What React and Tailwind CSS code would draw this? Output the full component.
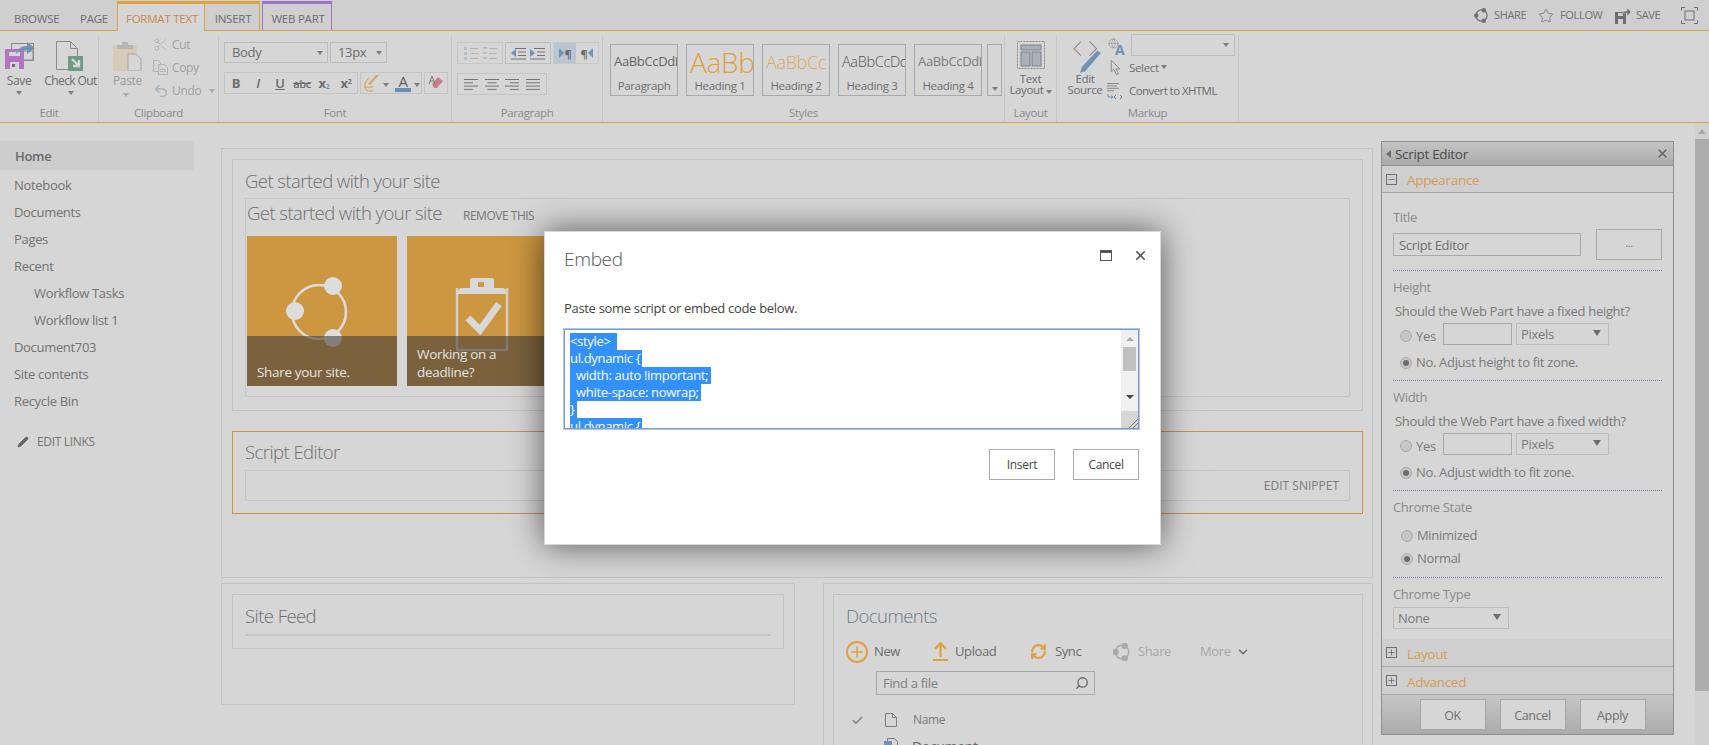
import { Scissors, Undo2, Star, Pencil, Search, Check, ChevronDown, Plus, Minus, X, RefreshCw, Globe } from "lucide-react";

const Caret = ({ className = "" }) => (
  <span className={`inline-block w-0 h-0 border-x-[3px] border-x-transparent border-t-[4px] border-t-[#7d7d7d] ${className}`}></span>
);

const GroupLabel = ({ children }) => (
  <div className="h-[20px] pt-[2px] flex items-center justify-center text-[11.500px] text-[#8a8a8a]">{children}</div>
);

const Lines = ({ widths, x = 0, y = 0, gap = 4, color = "#7d7d7d" }) => (
  <>
    {widths.map((w, i) => (
      <rect key={i} x={x + (typeof w === "number" ? 0 : w[0])} y={y + i * gap} width={typeof w === "number" ? w : w[1]} height="1" fill={color} />
    ))}
  </>
);

const SaveIcon = () => (
  <svg width="30" height="30" viewBox="0 0 30 30" className="block">
    <rect x="6.5" y="2.5" width="22" height="17" fill="none" stroke="#8a8a8a" />
    <rect x="17" y="10" width="11" height="9" fill="#d6d6d6" stroke="#8a8a8a" />
    <path d="M0 8h19v20H0z" fill="#b574c2" />
    <rect x="4" y="11" width="11" height="4" fill="#d6d6d6" />
    <rect x="5" y="21" width="9" height="7" fill="#d6d6d6" />
    <rect x="7" y="23" width="3" height="3" fill="#6d6d6d" />
    <path d="M11 13c1-5 5-8 11-8V1l8 6-8 6V9c-5 0-8 1-11 4z" fill="#6f92b5" />
  </svg>
);

const CheckOutIcon = () => (
  <svg width="28" height="30" viewBox="0 0 28 30" className="block">
    <path d="M0.5 0.5h14l7 7v21h-21z" fill="none" stroke="#8a8a8a" />
    <path d="M14.5 .5v7h7" fill="none" stroke="#8a8a8a" />
    <rect x="12" y="15" width="15" height="15" fill="#6f9b84" />
    <path d="M16 18l7 7M23 19v6h-6" stroke="#d6d6d6" strokeWidth="2.4" fill="none" />
  </svg>
);

const PasteIcon = () => (
  <svg width="29" height="30" viewBox="0 0 29 30" className="block">
    <rect x="0" y="4" width="24" height="26" fill="#d4ccb9" />
    <path d="M4 4h16v4H4zM9 1h6v4H9z" fill="#b5b5b5" />
    <path d="M15 13h8l5 5v12H15z" fill="#d6d6d6" stroke="#a8a8a8" />
  </svg>
);

const CopyIcon = () => (
  <svg width="15" height="15" viewBox="0 0 15 15" className="block">
    <path d="M.5.5h5l2 2v9h-7z" fill="none" stroke="#b2b2b2" />
    <path d="M5.5 4.5h6l3 3v7h-9z" fill="#d6d6d6" stroke="#b2b2b2" />
    <Lines widths={[6, 6]} x={7} y={9} gap={2} color="#b2b2b2" />
  </svg>
);

const ListIcon = ({ numbered }) => (
  <svg width="14" height="14" viewBox="0 0 14 14" className="block">
    {[1, 6, 11].map((y) => (
      <rect key={y} x="0" y={y} width={numbered ? 4 : 3} height={numbered ? 2 : 3} fill="#b8bfc6" />
    ))}
    <Lines widths={[8, 8, 8]} x={6} y={2} gap={5} color="#b3b3b3" />
  </svg>
);

const IndentIcon = ({ flip }) => (
  <svg width="15" height="13" viewBox="0 0 15 13" className="block">
    <Lines widths={[[4, 11], [7, 8], [7, 8], [0, 15]]} y={1} gap={3.5} color="#737373" />
    <path d={flip ? "M5 2v8l-5-4z" : "M0 2v8l5-4z"} fill="#6f92b5" />
  </svg>
);

const DirIcon = ({ flip }) => (
  <div className={`flex items-center gap-[1px] ${flip ? "flex-row-reverse" : ""}`}>
    <span className={`w-0 h-0 border-y-[5px] border-y-transparent ${flip ? "border-r-[5px] border-r-[#6f92b5]" : "border-l-[5px] border-l-[#6f92b5]"}`}></span>
    <span className="text-[11px] font-bold leading-none text-[#6c6c6c]">¶</span>
  </div>
);

const AlignIcon = ({ kind }) => {
  const table = {
    left: [[0, 14], [0, 9], [0, 14], [0, 9]],
    center: [[0, 14], [2.5, 9], [0, 14], [2.5, 9]],
    right: [[0, 14], [5, 9], [0, 14], [5, 9]],
    justify: [[0, 14], [0, 14], [0, 14], [0, 14]],
  };
  return (
    <svg width="14" height="13" viewBox="0 0 14 13" className="block">
      <Lines widths={table[kind]} y={1} gap={3.3} color="#757575" />
    </svg>
  );
};

const TextLayoutIcon = () => (
  <svg width="28" height="28" viewBox="0 0 28 28" className="block">
    <rect x=".5" y=".5" width="27" height="27" fill="none" stroke="#8a8a8a" strokeDasharray="2 1" />
    <rect x="4" y="4" width="20" height="5" fill="#a9b2bb" stroke="#7b8086" />
    <rect x="4" y="11" width="9" height="14" fill="#a9b2bb" stroke="#7b8086" />
    <rect x="15" y="11" width="9" height="14" fill="#a9b2bb" stroke="#7b8086" />
  </svg>
);

const EditSourceIcon = () => (
  <svg width="32" height="33" viewBox="0 0 32 38" className="block">
    <path d="M9 2L1 10l8 8M19 2l8 8-8 8" fill="none" stroke="#8a8a8a" strokeWidth="1.2" />
    <path d="M28 12l4 3-18 21-6 2 2-7z" fill="#6f92b5" />
  </svg>
);

const ConvertIcon = () => (
  <svg width="16" height="16" viewBox="0 0 16 16" className="block">
    <Lines widths={[12, 10, 12, 7]} y={0} gap={2.4} color="#8a8a8a" />
    <path d="M1 11v3h5M4 12.5l2 1.5-2 1.5" stroke="#6f92b5" fill="none" />
    <path d="M9 12l-2 2 2 2M13 12l2 2-2 2" stroke="#7a7a7a" fill="none" />
  </svg>
);

const ShareGlyph = ({ size = 16, color = "#6f6f6f", dot = 3 }) => (
  <svg width={size} height={size} viewBox="0 0 20 20" className="block">
    <circle cx="10" cy="10" r="7.5" fill="none" stroke={color} strokeWidth="1.6" />
    <circle cx="13" cy="3" r={dot} fill={color} />
    <circle cx="3" cy="10" r={dot} fill={color} />
    <circle cx="13" cy="17" r={dot} fill={color} />
  </svg>
);

const SaveGlyph = () => (
  <svg width="16" height="16" viewBox="0 0 16 16" className="block">
    <path d="M0 4h11v12H0z" fill="#6d6d6d" />
    <rect x="3" y="5" width="5" height="3" fill="#d0d0d0" />
    <rect x="3" y="11" width="5" height="5" fill="#d0d0d0" />
    <path d="M6 6c1-2 3-3 6-3V0l4 4-4 4V5C9 5 7 6 6 6z" fill="#6d6d6d" stroke="#d0d0d0" strokeWidth=".5" />
  </svg>
);

const FocusGlyph = () => (
  <svg width="17" height="17" viewBox="0 0 17 17" className="block">
    <rect x="4" y="4" width="9" height="9" fill="none" stroke="#6d6d6d" />
    <path d="M4 .5H.5v3M13 .5h3.500v3M4 16.500H.5v-3M13 16.500h3.500v-3" fill="none" stroke="#6d6d6d" />
  </svg>
);

const UploadGlyph = () => (
  <svg width="15" height="20" viewBox="0 0 15 20" className="block">
    <path d="M7.500 1v14M2 7l5.500-6L13 7" fill="none" stroke="#dfa040" strokeWidth="2.200" />
    <rect x="0" y="17" width="15" height="2" fill="#dfa040" />
  </svg>
);

const ClipboardGlyph = () => (
  <svg width="56" height="76" viewBox="0 0 56 76" className="block">
    <path d="M3 12v60q0 2 2 2h46q2 0 2-2V12" fill="none" stroke="#d8d8d8" strokeWidth="2.500" opacity=".85" />
    <path d="M8 12h8V4q0-2 2-2h20q2 0 2 2v8h8q4 0 4 4v2H4v-2q0-4 4-4z" fill="#d8d8d8" />
    <rect x="24" y="6" width="6" height="5" fill="#cc9740" />
    <path d="M14 42l12 12 19-26" fill="none" stroke="#d8d8d8" strokeWidth="7" />
  </svg>
);

const FontBtn = ({ children, className = "" }) => (
  <span className={`w-[22px] text-center leading-none ${className}`}>{children}</span>
);

const StyleBox = ({ preview, name, previewClass }) => (
  <div className="w-[68px] h-[52px] border border-[#a9a9a9] overflow-hidden flex flex-col items-center">
    <div className={`h-[31px] w-full pl-[3px] pt-[3px] flex items-center justify-start whitespace-nowrap overflow-hidden ${previewClass}`}>{preview}</div>
    <div className="text-[11.500px] leading-[17px] mt-[1px] text-[#6e6e6e] whitespace-nowrap">{name}</div>
  </div>
);

const Ribbon = () => (
  <div className="h-[92px] flex border-b border-[#dfa23e] bg-[#d6d6d6] text-[#6c6c6c] text-[11.500px] tracking-[-0.03em]">
    <div className="w-[99px] mt-[4px] border-r border-[#c6c6c6] flex flex-col">
      <div className="h-[67px] flex text-[12px] leading-[15px]">
        <div className="w-[38px] pt-[6px] flex flex-col items-start">
          <div className="ml-[5px]"><SaveIcon /></div>
          <div className="w-[38px] text-center mt-[2px]">Save</div>
          <div className="w-[38px] text-center leading-[8px] -mt-[1px]"><Caret /></div>
        </div>
        <div className="w-[55px] ml-[5px] pt-[6px] flex flex-col items-center">
          <div className="pr-[2px]"><CheckOutIcon /></div>
          <div className="mt-[2px] whitespace-nowrap tracking-[-0.05em]">Check Out</div>
          <div className="leading-[8px] -mt-[1px]"><Caret /></div>
        </div>
      </div>
      <GroupLabel>Edit</GroupLabel>
    </div>

    <div className="w-[120px] mt-[4px] border-r border-[#c6c6c6] flex flex-col text-[#a1a1a1]">
      <div className="h-[67px] flex text-[12px]">
        <div className="w-[54px] pl-[14px] pt-[6px] flex flex-col items-start">
          <PasteIcon />
          <div className="w-[26px] text-center mt-[2px] leading-[16px] text-[#9a9a9a]">Paste</div>
          <div className="w-[26px] text-center leading-[8px]"><Caret className="opacity-50" /></div>
        </div>
        <div className="flex flex-col -mt-[2px]">
          <div className="h-[24px] flex items-center gap-[4px]"><Scissors size={15} strokeWidth={1.3} color="#a8b3bd" /><span>Cut</span></div>
          <div className="h-[24px] flex items-center gap-[4px]"><CopyIcon /><span>Copy</span></div>
          <div className="h-[24px] flex items-center gap-[3px]"><Undo2 size={16} strokeWidth={2} color="#a8b3bd" /><span>Undo</span><Caret className="ml-[5px] opacity-50" /></div>
        </div>
      </div>
      <GroupLabel>Clipboard</GroupLabel>
    </div>

    <div className="w-[233px] mt-[4px] border-r border-[#c6c6c6] flex flex-col">
      <div className="h-[67px] pt-[7px] pl-[5px]">
        <div className="flex gap-[2px] text-[13px]">
          <div className="w-[104px] h-[21px] border border-[#bdbdbd] pl-[7px] pr-[4px] flex items-center justify-between">Body<Caret /></div>
          <div className="w-[57px] h-[21px] border border-[#bdbdbd] pl-[7px] pr-[4px] flex items-center justify-between">13px<Caret /></div>
        </div>
        <div className="flex gap-[2px] mt-[9px]">
          <div className="w-[134px] h-[22px] border border-[#c4c4c4] flex items-center text-[13px]">
            <FontBtn className="font-bold">B</FontBtn>
            <FontBtn className="italic font-semibold">I</FontBtn>
            <FontBtn className="underline font-semibold">U</FontBtn>
            <FontBtn className="line-through text-[11px] font-semibold">abc</FontBtn>
            <FontBtn className="font-bold">x<sub className="text-[7px] text-[#6f92b5]">2</sub></FontBtn>
            <FontBtn className="font-bold">x<sup className="text-[7px]">2</sup></FontBtn>
          </div>
          <div className="w-[62px] h-[22px] border border-[#c4c4c4] flex items-center pl-[3px]">
            <svg width="16" height="18" viewBox="0 0 16 18" className="block">
              <path d="M15 1L6 11l-2-1 8-9z" fill="#cfa869" />
              <path d="M5 4Q0 8 1 13t8 4" fill="none" stroke="#d9a855" strokeWidth="1.200" />
              <path d="M0 13h9" stroke="#d9a855" strokeWidth="1.200" />
            </svg>
            <Caret className="ml-[3px] mt-[3px]" />
            <div className="ml-[6px] flex flex-col items-center w-[16px]">
              <span className="text-[15px] leading-[13px] text-[#5f5f5f]">A</span>
              <span className="w-[16px] h-[4px] bg-[#6d8db0]"></span>
            </div>
            <Caret className="ml-[3px] mt-[3px]" />
          </div>
          <div className="w-[24px] h-[22px] border border-[#c4c4c4] flex items-center justify-center">
            <svg width="16" height="16" viewBox="0 0 16 16" className="block">
              <path d="M4 9l6-7 5 4-6 7H6z" fill="#c97f89" />
              <path d="M1 9l3-8 3 8M2 6h4" stroke="#7d7d7d" fill="none" />
            </svg>
          </div>
        </div>
      </div>
      <GroupLabel>Font</GroupLabel>
    </div>

    <div className="w-[151px] mt-[4px] border-r border-[#c6c6c6] flex flex-col">
      <div className="h-[67px] pt-[7px] pl-[5px]">
        <div className="flex gap-[2px]">
          <div className="w-[46px] h-[22px] border border-[#c8c8c8] flex items-center justify-around px-[3px]"><ListIcon /><ListIcon numbered /></div>
          <div className="w-[46px] h-[22px] border border-[#bdbdbd] flex items-center justify-around px-[3px]"><IndentIcon flip /><IndentIcon /></div>
          <div className="w-[46px] h-[22px] border border-[#c8c8c8] flex items-center">
            <div className="w-[23px] h-full bg-[#b9c6d2] flex items-center justify-center"><DirIcon /></div>
            <div className="w-[23px] h-full flex items-center justify-center"><DirIcon flip /></div>
          </div>
        </div>
        <div className="w-[90px] h-[22px] mt-[9px] border border-[#c4c4c4] flex items-center justify-around px-[3px]">
          <AlignIcon kind="left" /><AlignIcon kind="center" /><AlignIcon kind="right" /><AlignIcon kind="justify" />
        </div>
      </div>
      <GroupLabel>Paragraph</GroupLabel>
    </div>

    <div className="w-[402px] mt-[4px] border-r border-[#c6c6c6] flex flex-col">
      <div className="h-[67px] flex gap-[8px] pl-[7px] pt-[9px]">
        <StyleBox preview="AaBbCcDdE" name="Paragraph" previewClass="text-[13px] text-[#666]" />
        <StyleBox preview="AaBb" name="Heading 1" previewClass="text-[28px] font-light text-[#dfa040]" />
        <StyleBox preview="AaBbCc" name="Heading 2" previewClass="text-[18px] font-light text-[#dba65c]" />
        <StyleBox preview="AaBbCcDd" name="Heading 3" previewClass="text-[14.500px] font-light text-[#555]" />
        <StyleBox preview="AaBbCcDdE" name="Heading 4" previewClass="text-[13px] text-[#7c7c7c]" />
        <div className="w-[15px] h-[52px] -ml-[3px] border border-[#a9a9a9] flex items-end justify-center pb-[4px]"><Caret /></div>
      </div>
      <GroupLabel>Styles</GroupLabel>
    </div>

    <div className="w-[52px] mt-[4px] border-r border-[#c6c6c6] flex flex-col items-center">
      <div className="h-[67px] flex flex-col items-center">
        <div className="pt-[6px]"><TextLayoutIcon /></div>
        <div className="leading-[11px] text-center mt-[4px] whitespace-nowrap">Text<br />Layout<Caret className="ml-[2px]" /></div>
      </div>
      <GroupLabel>Layout</GroupLabel>
    </div>

    <div className="w-[182px] mt-[4px] border-r border-[#c6c6c6] flex flex-col">
      <div className="h-[67px] flex">
        <div className="w-[48px] pl-[8px] flex flex-col items-center leading-[11px]">
          <div className="pt-[5px] pl-[4px]"><EditSourceIcon /></div>
          <div className="text-center">Edit<br />Source</div>
        </div>
        <div className="flex flex-col -mt-[1px]">
          <div className="flex items-start">
            <div className="relative w-[26px] h-[24px] pt-[4px] pl-[3px]">
              <Globe size={11} strokeWidth={1} color="#7d7d7d" />
              <span className="absolute left-[10px] top-[9px] text-[14px] leading-none font-bold text-[#6f92b5]">A</span>
            </div>
            <div className="w-[104px] h-[22px] border border-[#bdbdbd] flex items-center justify-end pr-[5px]"><Caret /></div>
          </div>
          <div className="h-[24px] flex items-center -mt-[3px] pt-[1px]">
            <svg width="24" height="17" viewBox="0 0 25 17" className="block">
              <path d="M6.500 1v12l3-2.500 2.500 5.500 2-1-2.500-5h4z" fill="none" stroke="#8a8a8a" />
            </svg>
            <span>Select</span><Caret className="ml-[2px]" />
          </div>
          <div className="h-[24px] flex items-center pt-[1px]">
            <div className="w-[24px] pl-[2px]"><ConvertIcon /></div>
            <span className="whitespace-nowrap tracking-[-0.05em]">Convert to XHTML</span>
          </div>
        </div>
      </div>
      <GroupLabel>Markup</GroupLabel>
    </div>
  </div>
);

const TabBar = () => (
  <div className="h-[31px] bg-[#cfcfcf] border-b border-[#dfa23e] flex text-[11.500px] text-[#6c6c6c] pt-[1px] tracking-[-0.02em]">
    <div className="w-[67px] pl-[14px] pt-[9px]">BROWSE</div>
    <div className="w-[50px] pl-[13px] pt-[9px]">PAGE</div>
    <div className="w-[88px] h-[30px] bg-[#d6d6d6] border-t-[3px] border-x border-[#dfa23e] text-[#c98a47] text-center pt-[6px] pl-[2px] whitespace-nowrap">FORMAT TEXT</div>
    <div className="w-[55px] h-[29px] border-t-[3px] border-r border-[#dfa23e] text-center pt-[6px] pl-[2px]">INSERT</div>
    <div className="w-[70px] h-[29px] ml-[2px] border-t-[3px] border-x border-[#9d75c6] text-center pt-[6px] pl-[2px] whitespace-nowrap">WEB PART</div>
    <div className="ml-auto flex items-center h-[29px] text-[11px] tracking-[-0.03em] text-[#707070]">
      <ShareGlyph size={15} />
      <span className="ml-[5px] w-[32px] whitespace-nowrap">SHARE</span>
      <Star size={16} strokeWidth={1.200} className="ml-[12px]" />
      <span className="ml-[6px] w-[41px] whitespace-nowrap">FOLLOW</span>
      <div className="ml-[14px]"><SaveGlyph /></div>
      <span className="ml-[5px] w-[24px] whitespace-nowrap">SAVE</span>
      <div className="ml-[21px] mr-[11px]"><FocusGlyph /></div>
    </div>
  </div>
);

const navItems = [
  { label: "Notebook" },
  { label: "Documents" },
  { label: "Pages" },
  { label: "Recent" },
  { label: "Workflow Tasks", sub: true },
  { label: "Workflow list 1", sub: true },
  { label: "Document703" },
  { label: "Site contents" },
  { label: "Recycle Bin" },
];

const LeftNav = () => (
  <div className="w-[221px] shrink-0 pt-[18px] text-[13px] text-[#727272]">
    <div className="w-[194px] h-[29px] bg-[#cdcdcd] pl-[15px] pt-[3px] flex items-center font-semibold text-[#696969]">Home</div>
    {navItems.map((item) => (
      <div key={item.label} className={`h-[27px] pt-[5px] flex items-center ${item.sub ? "pl-[34px]" : "pl-[14px]"}`}>{item.label}</div>
    ))}
    <div className="h-[27px] mt-[14px] pl-[17px] pt-[3px] flex items-center gap-[8px] text-[12px] text-[#757575]">
      <Pencil size={12} strokeWidth={1.500} color="#666" fill="#666" />
      <span>EDIT LINKS</span>
    </div>
  </div>
);

const Tile = ({ caption, children }) => (
  <div className="relative w-[150px] h-[150px] bg-[#cc9740] overflow-hidden shrink-0">
    <div className="flex justify-center pt-[41px]">{children}</div>
    <div className="absolute inset-x-0 bottom-0 h-[50px] bg-[#45403a]/60 text-[#e3e3e3] text-[13.500px] leading-[18px] px-[10px] flex items-end pb-[5px]">
      <span>{caption}</span>
    </div>
  </div>
);

const headingText = "text-[18.500px] font-light tracking-[-0.03em] text-[#6e6e6e]";

const MainZone = () => (
  <div className="w-[1152px] shrink-0">
    <div className="mt-[25px] w-[1152px] h-[430px] border border-[#c4c4c4] pt-[10px] px-[10px]">
      <div className="w-[1131px] h-[252px] border border-[#c4c4c4] pl-[12px] pr-[12px]">
        <div className={`h-[38px] pt-[7px] leading-[28px] ${headingText}`}>Get started with your site</div>
        <div className="w-[1105px] h-[199px] border border-[#c4c4c4]">
          <div className="h-[37px] flex items-center">
            <span className={`ml-[1px] mb-[10px] leading-[28px] ${headingText}`}>Get started with your site</span>
            <span className="ml-[21px] mb-[3px] text-[12px] tracking-[-0.04em] text-[#777777]">REMOVE THIS</span>
          </div>
          <div className="flex gap-[10px] pl-[1px]">
            <Tile caption="Share your site.">
              <svg width="66" height="70" viewBox="0 0 66 70" className="block -ml-[6px]">
                <circle cx="33" cy="35" r="27" fill="none" stroke="#dddddd" strokeWidth="2.500" />
                <circle cx="47" cy="9" r="9" fill="#dddddd" />
                <circle cx="9" cy="34" r="9" fill="#dddddd" />
                <circle cx="47" cy="61" r="9" fill="#dddddd" />
              </svg>
            </Tile>
            <Tile caption="Working on a deadline?">
              <div className="-mt-[1px]"><ClipboardGlyph /></div>
            </Tile>
          </div>
        </div>
      </div>
      <div className="mt-[20px] w-[1131px] h-[83px] border border-[#cc8f45] pl-[12px]">
        <div className={`h-[38px] pt-[1px] flex items-center ${headingText}`}>Script Editor</div>
        <div className="w-[1105px] h-[31px] pt-[1px] border border-[#c4c4c4] flex items-center justify-end pr-[10px] text-[12px] tracking-normal text-[#7b7b7b]">EDIT SNIPPET</div>
      </div>
    </div>

    <div className="mt-[5px] flex">
      <div className="w-[574px] h-[122px] border border-[#c4c4c4] pt-[10px] px-[10px] shrink-0">
        <div className="w-[552px] h-[55px] border border-[#c4c4c4] px-[12px]">
          <div className={`h-[39px] pt-[3px] flex items-center ${headingText}`}>Site Feed</div>
          <div className="h-[2px] bg-[#c4c4c4]"></div>
        </div>
      </div>
      <div className="ml-[28px] w-[550px] h-[200px] border border-[#c4c4c4] pt-[10px] px-[9px]">
        <div className="w-[530px] h-[190px] border border-[#c4c4c4] pl-[12px]">
          <div className={`h-[40px] pt-[2px] flex items-center ${headingText} text-[#6e7b88]`}>Documents</div>
          <div className="h-[30px] pt-[3px] flex items-center text-[13px] tracking-[-0.03em] text-[#6c6c6c]">
            <span className="w-[22px] h-[22px] rounded-full border-2 border-[#dfa040] flex items-center justify-center"><Plus size={18} strokeWidth={2} color="#dfa040" /></span>
            <span className="ml-[6px] w-[25px]">New</span>
            <div className="ml-[34px] w-[15px]"><UploadGlyph /></div>
            <span className="ml-[7px] w-[41px]">Upload</span>
            <RefreshCw size={17} strokeWidth={3} color="#dfa040" className="ml-[34px]" />
            <span className="ml-[8px] w-[26px]">Sync</span>
            <div className="ml-[32px]"><ShareGlyph size={18} color="#a9a9a9" dot={3.500} /></div>
            <span className="ml-[7px] w-[32px] text-[#a6a6a6]">Share</span>
            <span className="ml-[30px] w-[30px] text-[#a6a6a6]">More</span>
            <ChevronDown size={14} strokeWidth={2.500} color="#6c6c6c" className="ml-[6px]" />
          </div>
          <div className="mt-[6px] ml-[30px] w-[219px] h-[24px] border border-[#a9a9a9] flex items-center justify-between pl-[6px] pr-[5px] pt-[2px] text-[13px] text-[#7f7f7f]">
            Find a file
            <Search size={14} strokeWidth={2.200} color="#666" className="-scale-x-100 -mt-[2px]" />
          </div>
          <div className="mt-[16px] flex items-center text-[12px] text-[#7b7b7b]">
            <Check size={13} strokeWidth={2.200} color="#777" className="ml-[5px]" />
            <svg width="12" height="14" viewBox="0 0 12 14" className="block ml-[21px]">
              <path d="M.5.5h7l4 4v9H.5zM7.500.5v4h4" fill="none" stroke="#7d7d7d" />
            </svg>
            <span className="ml-[16px]">Name</span>
          </div>
          <div className="mt-[9px] ml-[38px] flex items-start text-[14px] leading-[18px] text-[#666]">
            <svg width="14" height="14" viewBox="0 0 14 14" className="block">
              <path d="M3.500.5h7l3 3v10h-10z" fill="none" stroke="#7d7d7d" />
              <rect x="0" y="3" width="8" height="8" fill="#6f92b5" />
            </svg>
            <span className="ml-[14px]">Document</span>
          </div>
        </div>
      </div>
    </div>
  </div>
);

const Dotted = ({ className = "" }) => <div className={`border-t border-dotted border-[#6f7c9c] ${className}`}></div>;

const Radio = ({ on }) => (
  <span className="w-[12px] h-[12px] rounded-full border border-[#a9a9a9] bg-[#c6c6c6] flex items-center justify-center shrink-0">
    {on && <span className="w-[6px] h-[6px] rounded-full bg-[#6d6d6d]"></span>}
  </span>
);

const SelectBox = ({ value, className = "" }) => (
  <div className={`h-[22px] border border-[#bdbdbd] flex items-center justify-between pl-[4px] pr-[7px] text-[#7a7a7a] ${className}`}>
    <span className="pt-[2px]">{value}</span>
    <span className="w-0 h-0 border-x-[4px] border-x-transparent border-t-[6px] border-t-[#6d6d6d] -mt-[3px]"></span>
  </div>
);

const SizeBlock = ({ label, question, answer }) => (
  <>
    <div className="h-[20px] mt-[5px] pt-[3px] flex items-center text-[#8a8a8a]">{label}</div>
    <div className="h-[20px] mt-[4px] ml-[2px] pt-[3px] flex items-center text-[#7a7a7a] whitespace-nowrap">{question}</div>
    <div className="h-[22px] mt-[3px] flex items-center text-[#7a7a7a]">
      <span className="ml-[7px] mt-[4px]"><Radio /></span>
      <span className="ml-[4px] mt-[5px] w-[27px]">Yes</span>
      <span className="w-[69px] h-[22px] border border-[#a9a9a9]"></span>
      <SelectBox value="Pixels" className="ml-[4px] w-[93px]" />
    </div>
    <div className="h-[20px] mt-[6px] pt-[3px] flex items-center text-[#7a7a7a] whitespace-nowrap">
      <span className="ml-[7px]"><Radio on /></span>
      <span className="ml-[4px]">{answer}</span>
    </div>
  </>
);

const SectionRow = ({ label }) => (
  <div className="h-[28px] bg-[#cfcfcf] border-b border-[#a9a9a9] flex items-center pl-[4px] text-[#d69c55] text-[13.500px]">
    <span className="w-[11px] h-[11px] border border-[#707070] flex items-center justify-center"><Plus size={9} strokeWidth={1.500} color="#444" /></span>
    <span className="ml-[10px] pt-[4px]">{label}</span>
  </div>
);

const ToolPaneBtn = ({ children }) => (
  <div className="w-[66px] h-[31px] bg-[#d6d6d6] border border-[#a5a5a5] flex items-center justify-center pt-[3px] text-[12.500px]">{children}</div>
);

const ToolPane = () => (
  <div className="ml-[8px] mt-[18px] w-[293px] h-[594px] border border-[#8f8f8f] flex flex-col text-[13px] shrink-0">
    <div className="h-[24px] shrink-0 bg-gradient-to-b from-[#c4c4c4] to-[#ababab] border-b border-[#8f8f8f] flex items-center pl-[4px] pr-[4px] text-[13.500px] text-[#4a4a4a]">
      <span className="w-0 h-0 border-y-[4px] border-y-transparent border-r-[5px] border-r-[#6d6d6d]"></span>
      <span className="ml-[4px] pt-[2px]">Script Editor</span>
      <X size={13} strokeWidth={3} color="#666" className="ml-auto" />
    </div>
    <div className="h-[27px] bg-[#cfcfcf] border-b border-[#a9a9a9] flex items-center pl-[4px] text-[#d69c55] text-[13.500px]">
      <span className="w-[11px] h-[11px] border border-[#707070] flex items-center justify-center"><Minus size={9} strokeWidth={1.500} color="#444" /></span>
      <span className="ml-[10px] pt-[3px]">Appearance</span>
    </div>
    <div className="flex-1 px-[11px]">
      <div className="h-[20px] mt-[13px] pt-[3px] flex items-center text-[#8a8a8a]">Title</div>
      <div className="h-[31px] mt-[3px] flex items-center justify-between text-[#6f6f6f]">
        <div className="w-[188px] h-[23px] border border-[#a9a9a9] pl-[5px] pt-[2px] flex items-center">Script Editor</div>
        <div className="w-[66px] h-[31px] border border-[#a9a9a9] flex items-center justify-center text-[11px] pb-[2px]">...</div>
      </div>
      <Dotted className="mt-[10px]" />
      <SizeBlock label="Height" question="Should the Web Part have a fixed height?" answer="No. Adjust height to fit zone." />
      <Dotted className="mt-[9px]" />
      <SizeBlock label="Width" question="Should the Web Part have a fixed width?" answer="No. Adjust width to fit zone." />
      <Dotted className="mt-[9px]" />
      <div className="h-[20px] mt-[5px] pt-[3px] flex items-center text-[#8a8a8a]">Chrome State</div>
      <div className="h-[20px] mt-[8px] pt-[3px] flex items-center text-[#7a7a7a]"><span className="ml-[8px]"><Radio /></span><span className="ml-[4px]">Minimized</span></div>
      <div className="h-[20px] mt-[3px] pt-[3px] flex items-center text-[#7a7a7a]"><span className="ml-[8px]"><Radio on /></span><span className="ml-[4px]">Normal</span></div>
      <Dotted className="mt-[10px]" />
      <div className="h-[20px] mt-[5px] pt-[3px] flex items-center text-[#8a8a8a]">Chrome Type</div>
      <SelectBox value="None" className="mt-[4px] w-[116px]" />
    </div>
    <SectionRow label="Layout" />
    <SectionRow label="Advanced" />
    <div className="h-[39px] shrink-0 bg-gradient-to-b from-[#c6c6c6] to-[#ababab] flex items-start justify-center gap-[14px] pt-[4px] pl-[10px] text-[#6f6f6f]">
      <ToolPaneBtn>OK</ToolPaneBtn>
      <ToolPaneBtn>Cancel</ToolPaneBtn>
      <ToolPaneBtn>Apply</ToolPaneBtn>
    </div>
  </div>
);

const PageScrollbar = () => (
  <div className="ml-auto w-[14px] bg-[#d0d0d0] flex flex-col items-center shrink-0">
    <div className="h-[16px] flex items-center justify-center">
      <span className="w-0 h-0 border-x-[4px] border-x-transparent border-b-[5px] border-b-[#a9a9a9]"></span>
    </div>
    <div className="w-full h-[552px] bg-[#adadad]"></div>
  </div>
);

const snippetLines = [
  { text: "<style>", w: "w-[47px]" },
  { text: "ul.dynamic {", w: "w-[72px]" },
  { text: "  width: auto !important;", w: "w-[141px]" },
  { text: "  white-space: nowrap;", w: "w-[131px]" },
  { text: "}", w: "w-[7px]" },
  { text: "ul.dynamic {", w: "w-[72px]" },
];

const EmbedDialog = () => (
  <div className="absolute left-[544px] top-[231px] w-[617px] h-[314px] bg-white border border-[#d8d8d8] shadow-[0_0_32px_rgba(0,0,0,0.6)] z-10 px-[19px] text-[#444]">
    <div className="h-[53px] flex items-center justify-between pt-[1px]">
      <span className="text-[19px] font-light text-[#555]">Embed</span>
      <div className="flex items-center -mr-[7px] -mt-[8px]">
        <span className="w-[12px] h-[11px] border border-[#555] border-t-[3px]"></span>
        <X size={15} strokeWidth={2.600} color="#555" className="ml-[21px]" />
      </div>
    </div>
    <div className="mt-[14px] h-[20px] flex items-center text-[13px] text-[#444]">Paste some script or embed code below.</div>
    <div className="mt-[10px] w-[575px] h-[100px] border border-[#7f9db9] ring-1 ring-[#a9c8f0] flex overflow-hidden">
      <div className="flex-1 pl-[5px] pt-[3px] text-[13px] leading-[17px] text-white whitespace-pre overflow-hidden">
        {snippetLines.map((line, i) => (
          <div key={i} className={`h-[17px] bg-[#3390ff] ${line.w}`}>{line.text}</div>
        ))}
      </div>
      <div className="w-[17px] bg-[#f0f0f0] flex flex-col items-center shrink-0">
        <div className="h-[17px] flex items-center justify-center">
          <span className="w-0 h-0 border-x-[4px] border-x-transparent border-b-[4px] border-b-[#a9a9a9]"></span>
        </div>
        <div className="w-[13px] h-[24px] bg-[#c0c0c0]"></div>
        <div className="h-[30px] flex items-end justify-center pb-[2px]">
          <span className="w-0 h-0 border-x-[4px] border-x-transparent border-t-[4px] border-t-[#444]"></span>
        </div>
        <div className="mt-auto w-full h-[17px] bg-[#d6d6d6] flex items-end justify-end">
          <svg width="10" height="10" viewBox="0 0 10 10" className="block">
            <path d="M10 1L1 10M10 5L5 10" stroke="#777" />
          </svg>
        </div>
      </div>
    </div>
    <div className="mt-[20px] w-[575px] flex justify-end gap-[18px] text-[12px] text-[#444]">
      <div className="w-[66px] h-[31px] border border-[#ababab] flex items-center justify-center">Insert</div>
      <div className="w-[66px] h-[31px] border border-[#ababab] flex items-center justify-center">Cancel</div>
    </div>
  </div>
);

export default function App() {
  return (
    <div className="relative w-[1709px] h-[745px] overflow-hidden bg-[#d6d6d6] font-['Open_Sans','Noto_Sans',sans-serif] tracking-[-0.02em]">
      <TabBar />
      <Ribbon />
      <div className="h-[622px] flex">
        <LeftNav />
        <MainZone />
        <ToolPane />
        <PageScrollbar />
      </div>
      <EmbedDialog />
    </div>
  );
}
